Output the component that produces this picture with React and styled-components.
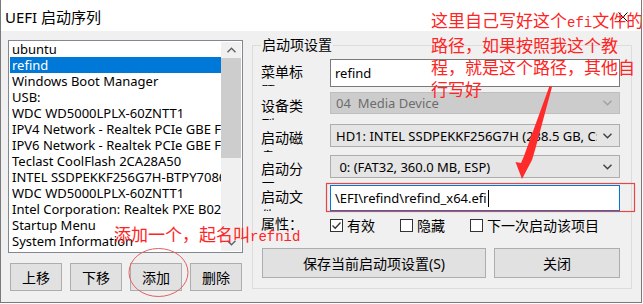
import React from "react";
import styled, { createGlobalStyle } from "styled-components";

const UI = `"Noto Sans", "Noto Sans CJK SC", sans-serif`;
const NOTE = `"Noto Sans CJK SC", sans-serif`;

const Global = createGlobalStyle`
  html, body { margin: 0; padding: 0; background: #fff; }
  body { font-family: ${UI}; }
  * { box-sizing: border-box; }
`;

const Window = styled.div`
  position: relative;
  width: 642px;
  height: 303px;
  border: 1px solid #7a7a7a;
  border-top: none;
  background: #f0f0f0;
  display: flex;
  flex-direction: column;
  font-family: ${UI};
  color: #000;
  overflow: hidden;
`;

const TitleBar = styled.div`
  height: 31px;
  flex: none;
  background: #fff;
  display: flex;
  align-items: center;
  justify-content: space-between;
  padding: 2px 13px 0 4px;
`;

const Title = styled.div`
  font-size: 15px;
  line-height: 20px;
`;

const Body = styled.div`
  flex: 1;
  display: flex;
  align-items: flex-start;
`;

const LeftPane = styled.div`
  display: flex;
  flex-direction: column;
  padding: 9px 0 0 7px;
`;

const ListBox = styled.div`
  width: 235px;
  height: 213px;
  border: 1px solid #828790;
  background: #fff;
  display: flex;
`;

const Items = styled.div`
  width: 212px;
  flex: none;
  padding-left: 1px;
  overflow: hidden;
`;

const Item = styled.div`
  height: 16px;
  line-height: 16px;
  font-size: 13px;
  padding-left: 2px;
  white-space: nowrap;
  background: ${(p) => (p.$selected ? "#0078d7" : "transparent")};
  color: ${(p) => (p.$selected ? "#fff" : "#000")};
`;

const ScrollBar = styled.div`
  width: 20px;
  margin: 1px 1px 1px 0;
  background: #f0f0f0;
  display: flex;
  flex-direction: column;
`;

const ScrollArrow = styled.div`
  height: 16px;
  flex: none;
  display: flex;
  align-items: center;
  justify-content: center;
`;

const Thumb = styled.div`
  height: 100px;
  flex: none;
  background: #cdcdcd;
`;

const Track = styled.div`
  flex: 1;
`;

const ButtonRow = styled.div`
  display: flex;
  gap: 8px;
  margin-top: 10px;
  padding-left: 2px;
`;

const Btn = styled.button`
  width: ${(p) => p.$w}px;
  height: ${(p) => p.$h}px;
  margin: 0;
  padding: 0;
  border: 1px solid #adadad;
  background: #e1e1e1;
  font-family: ${UI};
  font-size: 14px;
  color: #000;
  display: flex;
  align-items: center;
  justify-content: center;
`;

const Group = styled.fieldset`
  width: 380px;
  margin: 6px 0 0 9px;
  padding: 0 11px 10px 8px;
  border: 1px solid #dcdcdc;
  min-width: 0;
`;

const Legend = styled.legend`
  padding: 0 1px;
  font-size: 14px;
  line-height: 16px;
`;

const Field = styled.div`
  display: flex;
  height: ${(p) => p.$h}px;
  margin-top: ${(p) => p.$top}px;
`;

const Label = styled.div`
  width: 69px;
  flex: none;
`;

const LabelText = styled.div`
  width: 44px;
  height: 24px;
  overflow: hidden;
  margin-top: ${(p) => p.$dy}px;
  font-size: 14px;
  line-height: 19px;
`;

const TextBox = styled.div`
  flex: 1;
  border: 1px solid ${(p) => (p.$focus ? "#0078d7" : "#7a7a7a")};
  background: #fff;
  display: flex;
  align-items: center;
  padding-left: 4px;
  font-size: 13px;
  white-space: nowrap;
`;

const Caret = styled.span`
  display: inline-block;
  width: 1px;
  height: 17px;
  background: #000;
  margin-left: 1px;
`;

const Combo = styled.div`
  flex: 1;
  min-width: 0;
  border: 1px solid ${(p) => (p.$disabled ? "#bfbfbf" : "#adadad")};
  background: ${(p) => (p.$disabled ? "#cccccc" : "#e5e5e5")};
  color: ${(p) => (p.$disabled ? "#6d6d6d" : "#000")};
  display: flex;
  align-items: center;
  padding: 0 7px 0 5px;
  font-size: 13px;
`;

const ComboText = styled.div`
  flex: 1;
  min-width: 0;
  overflow: hidden;
  white-space: pre;
  margin-right: 6px;
`;

const CheckRow = styled.div`
  flex: 1;
  display: flex;
  align-items: center;
  gap: 25px;
`;

const CheckItem = styled.label`
  display: flex;
  align-items: center;
  gap: 4px;
  font-size: 14px;
`;

const Box = styled.span`
  width: 13px;
  height: 13px;
  border: 1px solid #333;
  background: #fff;
  display: flex;
  align-items: center;
  justify-content: center;
`;

const ActionRow = styled.div`
  flex: 1;
  display: flex;
  gap: 8px;
  padding-left: 1px;
`;

const Note = styled.div`
  position: absolute;
  left: ${(p) => p.$x}px;
  top: ${(p) => p.$y}px;
  font-family: ${NOTE};
  font-size: 17px;
  line-height: 22px;
  color: #ff2424;
  white-space: nowrap;
  pointer-events: none;
`;

const Latin = styled.span`
  font-family: "Liberation Mono", monospace;
  font-size: 14px;
`;

const Markup = styled.svg`
  position: absolute;
  left: 0;
  top: 0;
  pointer-events: none;
`;

const Chevron = ({ down, color = "#606060" }) => (
  <svg width="9" height="6" viewBox="0 0 9 6">
    <path
      d={down ? "M0.5 0.8 L4.5 4.8 L8.5 0.8" : "M0.5 5.2 L4.5 1.2 L8.5 5.2"}
      fill="none"
      stroke={color}
      strokeWidth="1.4"
    />
  </svg>
);

const items = [
  "ubuntu",
  "refind",
  "Windows Boot Manager",
  "USB:",
  "WDC WD5000LPLX-60ZNTT1",
  "IPV4 Network - Realtek PCIe GBE Family Controller",
  "IPV6 Network - Realtek PCIe GBE Family Controller",
  "Teclast CoolFlash 2CA28A50",
  "INTEL SSDPEKKF256G7H-BTPY70860",
  "WDC WD5000LPLX-60ZNTT1",
  "Intel Corporation: Realtek PXE B02 D00",
  "Startup Menu",
  "System Information",
];

const Check = ({ checked, children }) => (
  <CheckItem>
    <Box>
      {checked && (
        <svg width="11" height="11" viewBox="0 0 11 11">
          <path d="M1.5 5.5 L4.2 8.2 L9.5 2.5" fill="none" stroke="#333" strokeWidth="1.3" />
        </svg>
      )}
    </Box>
    {children}
  </CheckItem>
);

export default function App() {
  return (
    <>
      <Global />
      <Window>
        <TitleBar>
          <Title>UEFI 启动序列</Title>
          <svg width="10" height="10" viewBox="0 0 10 10">
            <path d="M0.5 0.5 L9.5 9.5 M9.5 0.5 L0.5 9.5" stroke="#000" strokeWidth="1" />
          </svg>
        </TitleBar>
        <Body>
          <LeftPane>
            <ListBox>
              <Items>
                {items.map((t, i) => (
                  <Item key={i} $selected={i === 1}>
                    {t}
                  </Item>
                ))}
              </Items>
              <ScrollBar>
                <ScrollArrow>
                  <Chevron />
                </ScrollArrow>
                <Thumb />
                <Track />
                <ScrollArrow>
                  <Chevron down />
                </ScrollArrow>
              </ScrollBar>
            </ListBox>
            <ButtonRow>
              <Btn $w={52} $h={28}>上移</Btn>
              <Btn $w={52} $h={28}>下移</Btn>
              <Btn $w={52} $h={28}>添加</Btn>
              <Btn $w={52} $h={28}>删除</Btn>
            </ButtonRow>
          </LeftPane>
          <Group>
            <Legend>启动项设置</Legend>
            <Field $top={6} $h={28}>
              <Label>
                <LabelText $dy={3}>菜单标题</LabelText>
              </Label>
              <TextBox>refind</TextBox>
            </Field>
            <Field $top={5} $h={22}>
              <Label>
                <LabelText $dy={4}>设备类型</LabelText>
              </Label>
              <Combo $disabled>
                <ComboText>04  Media Device</ComboText>
                <Chevron down color="#a0a0a0" />
              </Combo>
            </Field>
            <Field $top={10} $h={23}>
              <Label>
                <LabelText $dy={4}>启动磁盘</LabelText>
              </Label>
              <Combo>
                <ComboText>HD1: INTEL SSDPEKKF256G7H (238.5 GB, C: Internal)</ComboText>
                <Chevron down color="#404040" />
              </Combo>
            </Field>
            <Field $top={8} $h={23}>
              <Label>
                <LabelText $dy={4}>启动分区</LabelText>
              </Label>
              <Combo>
                <ComboText> 0: (FAT32, 360.0 MB, ESP)</ComboText>
                <Chevron down color="#404040" />
              </Combo>
            </Field>
            <Field $top={7} $h={26}>
              <Label>
                <LabelText $dy={2}>启动文件</LabelText>
              </Label>
              <TextBox $focus>
                \EFI\refind\refind_x64.efi
                <Caret />
              </TextBox>
            </Field>
            <Field $top={6} $h={16}>
              <Label>
                <LabelText $dy={-3}>属性：</LabelText>
              </Label>
              <CheckRow>
                <Check checked>有效</Check>
                <Check>隐藏</Check>
                <Check>下一次启动该项目</Check>
              </CheckRow>
            </Field>
            <Field $top={15} $h={30}>
              <ActionRow>
                <Btn $w={224} $h={30}>保存当前启动项设置(S)</Btn>
                <Btn $w={126} $h={30}>关闭</Btn>
              </ActionRow>
            </Field>
          </Group>
        </Body>

        <Markup width="642" height="303" viewBox="0 0 642 303">
          <rect x="325.5" y="183.5" width="308" height="28" fill="none" stroke="#e84545" strokeWidth="1.2" />
          <ellipse cx="157.5" cy="272.5" rx="29.5" ry="24" fill="none" stroke="#e06060" strokeWidth="1" />
          <polygon
            points="548.5,86 551,87 534,150 531,160 521,179 514.5,162 520,163 523,156"
            fill="#ff2a2a"
          />
        </Markup>

        <Note $x={430} $y={9}>
          这里自己写好这个<Latin>efi</Latin>文件的
          <br />
          路径，如果按照我这个教
          <br />
          程，就是这个路径，其他自
          <br />
          行写好
        </Note>
        <Note $x={113} $y={223}>
          添加一个，起名叫<Latin>refnid</Latin>
        </Note>
      </Window>
    </>
  );
}
